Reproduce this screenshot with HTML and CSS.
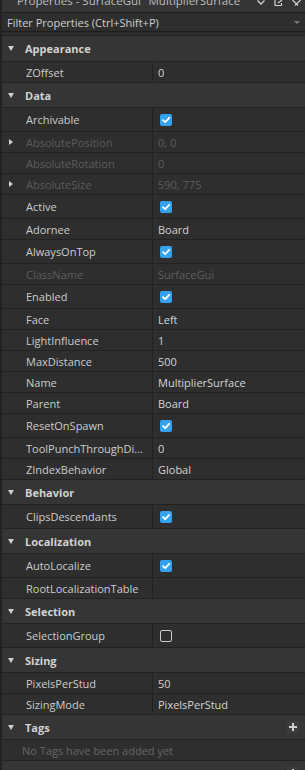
FILE: index.html
```html
<!DOCTYPE html>
<html>
<head>
<meta charset="utf-8">
<link rel="stylesheet" href="styles.css">
</head>
<body>
<div class="panel">
  <div class="titlebar">
    <span class="title">Properties - SurfaceGui "MultiplierSurface"</span>
    <div class="tb-icons">
      <svg class="tb-ico" width="8" height="6" viewBox="0 0 8 6"><path d="M0.5 0.5 L4 4 L7.5 0.5" fill="none" stroke="#cfcfcf" stroke-width="1.4"/></svg>
      <svg class="tb-ico" width="9" height="6" viewBox="0 0 9 6"><path d="M1 0 V5.5 H7.5 V3" fill="none" stroke="#cfcfcf" stroke-width="1.2"/><path d="M4 3 L8 0" fill="none" stroke="#cfcfcf" stroke-width="1.2"/></svg>
      <svg class="tb-ico" width="9" height="6" viewBox="0 0 9 6"><path d="M0.5 0 L6 5.5 M8.5 0 L3 5.5" fill="none" stroke="#cfcfcf" stroke-width="1.2"/></svg>
    </div>
  </div>
  <div class="filter-wrap">
    <div class="filter">
      <span class="filter-text">Filter Properties (Ctrl+Shift+P)</span>
      <span class="filter-caret"></span>
    </div>
  </div>
  <div class="list">
    <div class="hdr first"><span class="tri"></span>Appearance</div>
    <div class="row"><div class="name">ZOffset</div><div class="val">0</div></div>

    <div class="hdr"><span class="tri"></span>Data</div>
    <div class="row cb"><div class="name">Archivable</div><div class="val"><span class="check on"></span></div></div>
    <div class="row dis"><div class="name"><span class="exp"></span>AbsolutePosition</div><div class="val">0, 0</div></div>
    <div class="row dis"><div class="name">AbsoluteRotation</div><div class="val">0</div></div>
    <div class="row dis"><div class="name"><span class="exp"></span>AbsoluteSize</div><div class="val">590, 775</div></div>
    <div class="row cb"><div class="name">Active</div><div class="val"><span class="check on"></span></div></div>
    <div class="row"><div class="name">Adornee</div><div class="val">Board</div></div>
    <div class="row cb"><div class="name">AlwaysOnTop</div><div class="val"><span class="check on"></span></div></div>
    <div class="row dis"><div class="name">ClassName</div><div class="val">SurfaceGui</div></div>
    <div class="row cb"><div class="name">Enabled</div><div class="val"><span class="check on"></span></div></div>
    <div class="row"><div class="name">Face</div><div class="val">Left</div></div>
    <div class="row"><div class="name">LightInfluence</div><div class="val">1</div></div>
    <div class="row"><div class="name">MaxDistance</div><div class="val">500</div></div>
    <div class="row"><div class="name">Name</div><div class="val">MultiplierSurface</div></div>
    <div class="row"><div class="name">Parent</div><div class="val">Board</div></div>
    <div class="row cb"><div class="name">ResetOnSpawn</div><div class="val"><span class="check on"></span></div></div>
    <div class="row"><div class="name">ToolPunchThroughDi...</div><div class="val">0</div></div>
    <div class="row"><div class="name">ZIndexBehavior</div><div class="val">Global</div></div>

    <div class="hdr"><span class="tri"></span>Behavior</div>
    <div class="row cb"><div class="name">ClipsDescendants</div><div class="val"><span class="check on"></span></div></div>

    <div class="hdr"><span class="tri"></span>Localization</div>
    <div class="row cb"><div class="name">AutoLocalize</div><div class="val"><span class="check on"></span></div></div>
    <div class="row"><div class="name">RootLocalizationTable</div><div class="val"></div></div>

    <div class="hdr"><span class="tri"></span>Selection</div>
    <div class="row cb"><div class="name">SelectionGroup</div><div class="val"><span class="check"></span></div></div>

    <div class="hdr"><span class="tri"></span>Sizing</div>
    <div class="row"><div class="name">PixelsPerStud</div><div class="val">50</div></div>
    <div class="row"><div class="name">SizingMode</div><div class="val">PixelsPerStud</div></div>

    <div class="hdr"><span class="tri"></span><span class="hdr-label">Tags</span><span class="plus"></span></div>
    <div class="empty">No Tags have been added yet</div>

    <div class="hdr"><span class="tri"></span><span class="hdr-label">Attributes</span><span class="plus"></span></div>
  </div>
</div>
</body>
</html>
```

FILE: styles.css
```css
* { box-sizing: border-box; }
html, body { margin: 0; padding: 0; background: #2e2e2e; }
body { width: 305px; height: 770px; overflow: hidden; }

.panel {
  width: 305px;
  height: 770px;
  overflow: hidden;
  background: #2e2e2e;
  border-left: 2px solid #222222;
  font-family: "Open Sans", "Noto Sans", sans-serif;
  font-size: 11px;
  color: #cccccc;
}

.titlebar {
  height: 12px;
  overflow: hidden;
  background: #353535;
  display: flex;
  align-items: flex-start;
  padding-left: 15px;
}
.title {
  font-size: 11.5px;
  line-height: 14px;
  margin-top: -6px;
  color: #bdbdbd;
  white-space: nowrap;
  flex: 1;
  min-width: 0;
  overflow: hidden;
}
.tb-icons {
  flex: none;
  width: 56px;
  display: flex;
  gap: 9px;
  padding-left: 8px;
  align-items: flex-start;
}
.tb-ico { display: block; }

.filter-wrap {
  background: #2e2e2e;
  padding-bottom: 3px;
  border-bottom: 1px solid #222222;
}
.filter {
  height: 20px;
  border-top: 1px solid #1e1e1e;
  border-bottom: 1px solid #1e1e1e;
  display: flex;
  align-items: center;
  padding-left: 5px;
  padding-right: 5px;
  background: #2e2e2e;
}
.filter-text { color: #cfcfcf; white-space: nowrap; }
.filter-caret {
  margin-left: auto;
  width: 0; height: 0;
  border-left: 3px solid transparent;
  border-right: 3px solid transparent;
  border-top: 3px solid #7a7a7a;
}

.list { display: flex; flex-direction: column; }

.hdr {
  height: 25px;
  flex: none;
  background: #353535;
  border-bottom: 1px solid #222222;
  display: flex;
  align-items: center;
  font-weight: 700;
  color: #d2d2d2;
  padding-left: 6px;
}
.hdr.first { height: 26px; }
.tri {
  width: 0; height: 0;
  border-left: 3.5px solid transparent;
  border-right: 3.5px solid transparent;
  border-top: 5px solid #d0d0d0;
  margin-right: 11px;
  flex: none;
}
.hdr-label { flex: 1; }
.plus {
  width: 12px; height: 12px;
  margin-right: 6px;
  background:
    linear-gradient(#cfcfcf, #cfcfcf) center / 8px 2px no-repeat,
    linear-gradient(#cfcfcf, #cfcfcf) center / 2px 8px no-repeat,
    #3c3c3c;
}

.row {
  height: 21px;
  flex: none;
  display: flex;
  border-bottom: 1px solid #222222;
  background: #2e2e2e;
}
.row.cb { height: 24px; }
.name {
  width: 151px;
  flex: none;
  border-right: 1px solid #222222;
  padding-left: 24px;
  display: flex;
  align-items: center;
  position: relative;
  white-space: nowrap;
  overflow: hidden;
}
.val {
  flex: 1;
  padding-left: 5px;
  display: flex;
  align-items: center;
  white-space: nowrap;
  color: #d4d4d4;
}
.row.dis .name, .row.dis .val { color: #5c5c5c; }

.exp {
  position: absolute;
  left: 7px;
  top: 50%;
  margin-top: -3.5px;
  width: 0; height: 0;
  border-top: 3.5px solid transparent;
  border-bottom: 3.5px solid transparent;
  border-left: 4px solid #d0d0d0;
}

.check {
  width: 12px; height: 12px;
  margin-left: 2px;
  border-radius: 2px;
  border: 1px solid #cccccc;
  display: block;
}
.check.on {
  border: none;
  background: #35a2f0 url("data:image/svg+xml,%3Csvg xmlns='http://www.w3.org/2000/svg' width='12' height='12' viewBox='0 0 12 12'%3E%3Cpath d='M3 6.2 L5.2 8.2 L9.2 3.8' fill='none' stroke='white' stroke-width='1.8' stroke-linecap='round' stroke-linejoin='round'/%3E%3C/svg%3E") center / 12px 12px no-repeat;
}

.empty {
  height: 21px;
  flex: none;
  border-bottom: 1px solid #222222;
  display: flex;
  align-items: center;
  padding-left: 20px;
  color: #666666;
  background: #2e2e2e;
}
```
